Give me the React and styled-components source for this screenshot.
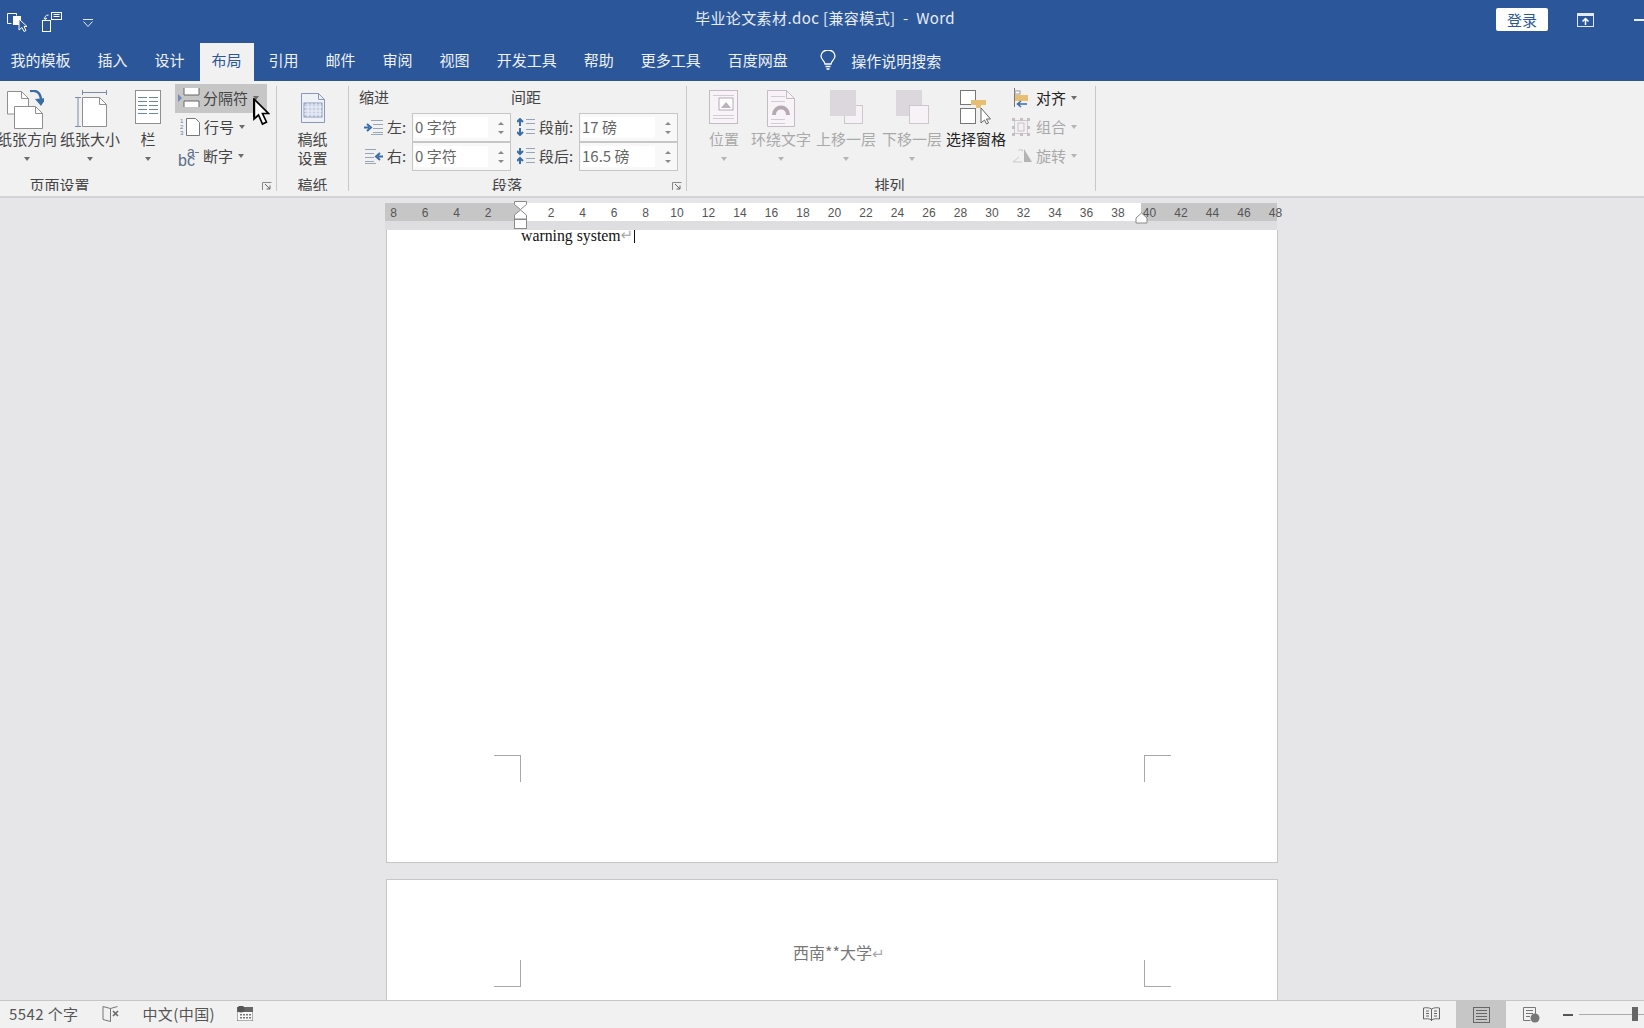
import React from 'react';
import styled, { createGlobalStyle } from 'styled-components';

const Global = createGlobalStyle`
  html, body { margin: 0; padding: 0; height: 100%; overflow: hidden; }
  #root { height: 100%; }
  * { box-sizing: border-box; }
`;

const App_ = styled.div`
  position: relative; height: 1028px; width: 1644px; overflow: hidden; display: flex; flex-direction: column;
  font-family: "Noto Sans CJK SC", "Liberation Sans", sans-serif; font-size: 15px; color: #444; background: #e6e6e8;
`;
const TitleBar = styled.div`
  position: relative; flex: 0 0 43px; background: #2b579a; display: flex; align-items: center; color: #f0f3f8;
`;
const Qat = styled.div`display: flex; align-items: center; padding-left: 6px; height: 100%;`;
const QatIcon = styled.svg`display: block; margin-right: ${p => p.$mr || 0}px; margin-top: ${p => p.$mt || 0}px;`;
const DocTitle = styled.div`
  position: absolute; left: 0; right: 0; top: 6px; text-align: center; padding-left: 6px; line-height: 24px; font-size: 15px; letter-spacing: .4px; white-space: pre; color: #e8edf5;
`;
const WinArea = styled.div`margin-left: auto; display: flex; align-items: center;`;
const SignIn = styled.div`
  width: 52px; height: 23px; background: #fff; border-radius: 2px; color: #2b579a; font-size: 15px; line-height: 23px; text-align: center; margin-right: 29px; margin-top: -4px;
`;
const RestoreIcon = styled.svg`display: block; margin-top: -4px;`;
const Minimize = styled.div`width: 10px; height: 2px; background: #e8edf5; margin-left: 40px; margin-top: -4px;`;

const TabBar = styled.div`
  flex: 0 0 38px; background: #2b579a; display: flex; align-items: stretch; margin-left: -3px;
`;
const Tab = styled.div`
  padding: 0 ${p => (p.$active ? '12.5px 0 12px' : '13.5px')}; margin-left: ${p => (p.$active ? '1.5px' : '0')}; margin-right: ${p => (p.$active ? '1px' : '0')}; line-height: 34px;
  color: ${p => (p.$active ? '#2b579a' : '#eef1f6')}; background: ${p => (p.$active ? '#f1f1f1' : 'transparent')};
  white-space: nowrap;
`;
const Search = styled.div`
  display: flex; align-items: center; color: #eef1f6; margin-left: 19px; gap: 15px; height: 34px;
`;
const LampIcon = styled.svg`display: block;`;

const Ribbon = styled.div`
  flex: 0 0 117px; background: #f1f1f1; border-bottom: 2px solid #d4d4d6; display: flex; padding-top: 5px;
`;
const Group = styled.div`
  position: relative; flex: 0 0 ${p => p.$w}px; height: 105px; border-right: 1px solid #c8c8c8; margin-left: ${p => p.$ml || 0}px; display: flex; flex-direction: column;
`;
const GroupBody = styled.div`flex: 0 0 89px; display: flex; align-items: flex-start; padding-left: ${p => p.$pl || 0}px;`;
const GroupLabel = styled.div`
  height: 16px; overflow: hidden; line-height: 20px; text-align: center; white-space: nowrap; color: #444; width: ${p => (p.$w ? `${p.$w}px` : 'auto')}; padding-left: ${p => p.$pl || 0}px;
`;
const Launcher = styled.svg`position: absolute; right: 4px; bottom: 0; display: block;`;
const BigBtn = styled.div`
  flex: 0 0 ${p => p.$w || 60}px; margin-left: ${p => p.$ml || 0}px; display: flex; flex-direction: column; align-items: center; color: ${p => (p.$off ? '#a9a9a9' : '#444')};
`;
const IconBox = styled.div`height: 43px; display: flex; align-items: flex-start; justify-content: center; padding-top: ${p => p.$top ?? 4}px; padding-right: ${p => p.$pr || 0}px;`;
const BigLabel = styled.div`line-height: 19px; white-space: nowrap; text-align: center; color: ${p => p.$c || 'inherit'};`;
const Caret = styled.span`
  display: inline-block; width: 0; height: 0; border-left: 3.5px solid transparent; border-right: 3.5px solid transparent; border-top: 4px solid ${p => (p.$off ? '#b5b5b5' : '#6d6d6d')};
`;
const CaretSlot = styled.div`height: 10px; margin-top: 6px; display: flex; align-items: center; justify-content: center;`;
const SmallCol = styled.div`flex: 0 0 ${p => p.$w}px; margin-left: ${p => p.$ml || 0}px; margin-top: -2px; display: flex; flex-direction: column;`;
const SmallBtn = styled.div`
  height: 29px; display: flex; align-items: center; padding-left: ${p => p.$pl || 0}px; padding-bottom: 2px; background: ${p => (p.$hot ? '#c6c6c6' : 'transparent')}; color: ${p => (p.$off ? '#a9a9a9' : '#444')}; white-space: nowrap;
`;
const SmallIcon = styled.div`flex: 0 0 ${p => p.$w || 28}px; display: flex; align-items: center;`;
const SmallText = styled.span`margin-right: 5px; color: ${p => p.$c || 'inherit'};`;

const ParaBody = styled.div`flex: 0 0 89px; display: grid; grid-template-columns: 152px 175px; padding-left: 10px; grid-template-rows: 27px 29px 29px;`;
const ParaHead = styled.div`line-height: 22px;`;
const SpinRow = styled.div`display: flex; align-items: center; padding-left: ${p => p.$pl || 5}px;`;
const SpinLabel = styled.div`flex: 0 0 ${p => p.$w}px; padding-left: ${p => p.$pl}px; white-space: nowrap; margin-top: -2px;`;
const SpinIcon = styled.svg`flex: 0 0 auto; display: block; margin-top: -1px;`;
const Spin = styled.div`
  flex: 0 0 99px; height: 29px; border: 1px solid #c6c6c6; background: #f8f8f8; display: flex; align-items: stretch;
`;
const SpinValue = styled.div`flex: 1; margin: 3px 0 3px 1px; background: #fff; color: #666; line-height: 19px; white-space: nowrap; padding-left: 1px;`;
const SpinArrows = styled.div`flex: 0 0 22px; display: flex; flex-direction: column; align-items: center; justify-content: center; gap: 6px; padding-left: 3px;`;
const MiniUp = styled.span`width: 0; height: 0; border-left: 3px solid transparent; border-right: 3px solid transparent; border-bottom: 3px solid #888;`;
const MiniDown = styled.span`width: 0; height: 0; border-left: 3px solid transparent; border-right: 3px solid transparent; border-top: 3px solid #888;`;

const Doc = styled.div`flex: 1; min-height: 0; overflow: hidden; padding: 5px 0 0 385px;`;
const RulerWrap = styled.div`position: relative; width: 892px;`;
const Ruler = styled.div`
  height: 18px; overflow: visible; display: flex; font-family: "Liberation Sans", sans-serif; font-size: 12px; color: #555;
  background: linear-gradient(to right, #c6c6c6 135px, #fff 135px, #fff 756px, #c6c6c6 756px);
`;
const TickTrack = styled.div`display: flex; margin-left: -7.25px;`;
const Tick = styled.div`flex: 0 0 31.5px; text-align: center; line-height: 20px;`;
const RulerBand = styled.div`height: 9px; background: #dedee0;`;
const RulerMarks = styled.svg`position: absolute; left: 0; top: -2px; display: block;`;
const Page = styled.div`
  position: relative; width: 892px; margin-left: 1px; height: ${p => p.$h}px; background: #fff; border: 1px solid #c6c6c6; border-top: ${p => (p.$first ? '0' : '1px solid #c6c6c6')};
  margin-bottom: 16px; padding-left: ${p => p.$pl}px; padding-top: ${p => p.$pt}px; overflow: hidden;
`;
const Line = styled.div`font-family: "Liberation Serif", serif; font-size: 15.8px; line-height: 17px; color: #111; display: flex; align-items: center; margin-top: -3px;`;
const Cursor = styled.span`display: inline-block; width: 1px; height: 15px; background: #111; margin-left: 1px;`;
const Mark = styled.span`color: #aaa; font-size: 15px; font-family: "DejaVu Sans", sans-serif;`;
const Campus = styled.div`font-size: 16px; line-height: 24px; color: #777; white-space: nowrap;`;
const Crop = styled.div`
  position: absolute; width: 27px; height: 27px; left: ${p => p.$x}px; top: ${p => p.$y}px;
  border-color: #a8a8a8; border-style: solid; border-width: 0;
  ${p => p.$dir === 'tr' ? 'border-top-width:1px;border-right-width:1px;' : ''}
  ${p => p.$dir === 'tl' ? 'border-top-width:1px;border-left-width:1px;' : ''}
  ${p => p.$dir === 'br' ? 'border-bottom-width:1px;border-right-width:1px;' : ''}
  ${p => p.$dir === 'bl' ? 'border-bottom-width:1px;border-left-width:1px;' : ''}
`;

const Status = styled.div`
  position: relative; flex: 0 0 28px; background: #f1f1f1; border-top: 1px solid #c6c6c6; display: flex; align-items: center; color: #555; font-size: 15px; line-height: 24px;
`;
const StatusLeft = styled.div`display: flex; align-items: center; padding: 0 0 2px 9px; height: 100%;`;
const StatusText = styled.span`margin-right: ${p => p.$mr}px; white-space: nowrap; letter-spacing: .4px;`;
const StatusIcon = styled.svg`display: block; margin-right: ${p => p.$mr || 0}px;`;
const StatusRight = styled.div`margin-left: auto; display: flex; align-items: stretch; height: 100%;`;
const ViewBtn = styled.div`
  flex: 0 0 50px; display: flex; align-items: center; justify-content: center; background: ${p => (p.$on ? '#c6c6c6' : 'transparent')};
`;
const Zoom = styled.div`position: relative; flex: 0 0 88px; display: flex; align-items: center; padding-left: 7px;`;
const ZoomMinus = styled.div`width: 10px; height: 2px; background: #555;`;
const ZoomLine = styled.div`flex: 1; height: 1px; background: #aaa; margin-left: 6px;`;
const ZoomThumb = styled.div`position: absolute; left: 76px; top: 6px; width: 6px; height: 14px; background: #666;`;
const Pointer = styled.svg`position: absolute; left: 253px; top: 98px; display: block;`;
const Svg = styled.svg`display: block;`;

const tabs = ['我的模板', '插入', '设计', '布局', '引用', '邮件', '审阅', '视图', '开发工具', '帮助', '更多工具', '百度网盘'];
const ticks = [8, 6, 4, 2, '', 2, 4, 6, 8, 10, 12, 14, 16, 18, 20, 22, 24, 26, 28, 30, 32, 34, 36, 38, 40, 42, 44, 46, 48];

const S = ({ w, h, children }) => <Svg width={w} height={h} viewBox={`0 0 ${w} ${h}`} fill="none">{children}</Svg>;

const Corner = () => (
  <Launcher width="10" height="9" viewBox="0 0 10 9" fill="none">
    <path d="M.5 8V.5H9.5" stroke="#8a8a8a" />
    <path d="M3 2l5 5M8 3.500V7H4.500" stroke="#666" />
  </Launcher>
);
const Orient = () => (
  <S w="38" h="39">
    <path d="M1.500 1.500h14l7 7V24h-21z" fill="#fff" stroke="#8f8f8f" />
    <path d="M15.500 1.500v7h7" stroke="#8f8f8f" />
    <path d="M8.500 16.500h21l7 7v15h-28z" fill="#fff" stroke="#8f8f8f" />
    <path d="M29.500 16.500v7h7" stroke="#8f8f8f" />
    <path d="M24 1c6-1 10 1 11 8" stroke="#3a6da8" strokeWidth="2.500" />
    <path d="M29 9l6 7 5-8z" fill="#3a6da8" />
  </S>
);
const SizeI = () => (
  <S w="33" h="37">
    <path d="M8.500 2.500h24M8.500 0v5M32.500 0v5" stroke="#7b8aa5" />
    <path d="M1 7.500h6M4 7.500v29M1 36.500h6" stroke="#7b8aa5" />
    <path d="M8.500 7.500h17l7 7v22h-24z" fill="#fff" stroke="#8f8f8f" />
    <path d="M25.500 7.500v7h7" stroke="#8f8f8f" />
  </S>
);
const Cols = () => (
  <S w="27" h="35">
    <rect x=".5" y=".5" width="25" height="33" fill="#fff" stroke="#8f8f8f" />
    {[7, 11, 15, 19, 23].map(y => <path key={y} d={`M3 ${y}.5h9M14 ${y}.5h9`} stroke="#6b86a8" />)}
  </S>
);
const Draft = () => (
  <S w="24" h="30">
    <path d="M.5.5h17l6 6v23H.5z" fill="#eef1f8" stroke="#8a97b5" />
    <path d="M17.500.5v6h6" stroke="#8a97b5" />
    <rect x="3" y="10" width="18" height="14" fill="#c9d1e6" stroke="#8a97b5" />
    {[14, 18, 21].map(y => <path key={y} d={`M3 ${y}h18`} stroke="#eef1f8" />)}
    {[7, 11, 15, 19].map(x => <path key={x} d={`M${x} 10v14`} stroke="#eef1f8" />)}
  </S>
);
const Position = () => (
  <S w="30" h="35">
    <rect x=".5" y=".5" width="28" height="33" fill="#f7f3f6" stroke="#c8bac4" />
    {[5, 25, 28].map(y => <path key={y} d={`M4 ${y}.5h21`} stroke="#d4cad2" />)}
    <rect x="10" y="8" width="14" height="12" fill="#fff" stroke="#b5aab3" />
    <path d="M12 18l5-6 5 6z" fill="#bcb2ba" />
  </S>
);
const Wrap = () => (
  <S w="28" h="37">
    <path d="M.5.5h19l8 8v28H.5z" fill="#f7f3f6" stroke="#c8bac4" />
    <path d="M19.500.5v8h8" stroke="#c8bac4" />
    {[6, 11, 29, 33].map(y => <path key={y} d={`M4 ${y}.5h14`} stroke="#d4cad2" />)}
    <path d="M7 25c0-10 14-10 14 0" stroke="#b5aab3" strokeWidth="4" />
  </S>
);
const LayerUp = () => (
  <S w="33" h="35">
    <rect x="14.500" y="15.500" width="18" height="18" fill="#f5f2f5" stroke="#cfc6cd" />
    <rect width="26" height="26" fill="#dcd7dc" />
  </S>
);
const LayerDown = () => (
  <S w="33" h="35">
    <rect width="26" height="26" fill="#dcd7dc" />
    <rect x="13.500" y="15.500" width="19" height="18" fill="#f6f2f6" stroke="#cfc6cd" />
  </S>
);
const SelectPane = () => (
  <S w="32" h="35">
    <rect x=".5" y=".5" width="15" height="14" fill="#fff" stroke="#777" />
    <rect x=".5" y="18.500" width="15" height="15" fill="#fff" stroke="#777" />
    <path d="M11 10h15v5h-5v3h-5v-3h-5z" fill="#e8bf72" />
    <path d="M21 18v15l3.500-3 2 4 2-1-2-4h4z" fill="#fff" stroke="#666" />
  </S>
);
const Breaks = () => (
  <S w="24" h="21">
    <path d="M0 7l4 4-4 4z" fill="#6f8db5" />
    <path d="M6 1v7h15V1M6 20v-6h15v6" fill="#fff" stroke="#666" />
  </S>
);
const LineNo = () => (
  <S w="24" h="18">
    <text x="0" y="5" fontSize="6" fill="#5a7da8" fontFamily="Liberation Sans">1</text>
    <text x="0" y="11" fontSize="6" fill="#5a7da8" fontFamily="Liberation Sans">2</text>
    <text x="0" y="17" fontSize="6" fill="#5a7da8" fontFamily="Liberation Sans">3</text>
    <path d="M6.500.5h9l4 4v13h-13z" fill="#fff" stroke="#777" />
  </S>
);
const Hyphen = () => (
  <S w="24" h="22">
    <text x="0" y="21" fontSize="16" fill="#5c6f88" fontFamily="Liberation Sans">b</text>
    <text x="9" y="21" fontSize="16" fill="#5c6f88" fontFamily="Liberation Sans">c</text>
    <text x="9" y="12" fontSize="14" fill="#5c6f88" fontFamily="Liberation Sans">a</text>
    <path d="M17 7.500h4" stroke="#777" />
  </S>
);
const Align = () => (
  <S w="17" h="20">
    <path d="M1.500 0v19" stroke="#777" />
    <rect x="2" y="3" width="5" height="3" fill="#fff" stroke="#999" />
    <rect x="2" y="7" width="13" height="6" fill="#e8bf72" />
    <path d="M14 16H5M8 13l-3.500 3 3.500 3" stroke="#3a6da8" strokeWidth="1.500" />
  </S>
);
const GroupI = () => (
  <S w="18" h="18">
    <rect x="2.500" y="2.500" width="13" height="13" stroke="#d0c8ce" />
    <rect x="6" y="5" width="6" height="8" stroke="#c9c1c7" />
    {[[0, 0], [8, 0], [15, 0], [0, 8], [15, 8], [0, 15], [8, 15], [15, 15]].map(([x, y]) => <rect key={`${x}-${y}`} x={x} y={y} width="3" height="3" fill="#c6bec4" />)}
  </S>
);
const Rotate = () => (
  <S w="20" h="15">
    <path d="M10 14H1l6-5" stroke="#c9c9c9" />
    <path d="M6 3c2-2 4-2 5 0M11 3l-2-1" stroke="#c9c9c9" />
    <path d="M12 1v13h8z" fill="#b4b4b4" />
  </S>
);
const IndentL = () => (
  <SpinIcon width="19" height="15" viewBox="0 0 19 15" fill="none">
    <path d="M7 .500h12M9 4.500h10M9 8.500h10M9 12.500h10M7 14.500h12" stroke="#98a5b8" />
    <path d="M0 7.500h5M3 4l4 3.500-4 3.500" stroke="#3a6da8" strokeWidth="2" />
  </SpinIcon>
);
const IndentR = () => (
  <SpinIcon width="19" height="15" viewBox="0 0 19 15" fill="none">
    <path d="M1 .500h11M1 4.500h9M1 8.500h9M1 12.500h9M1 14.500h11" stroke="#98a5b8" />
    <path d="M19 7.500h-5M16 4l-4 3.500 4 3.500" stroke="#3a6da8" strokeWidth="2" />
  </SpinIcon>
);
const SpaceB = () => (
  <SpinIcon width="19" height="18" viewBox="0 0 19 18" fill="none">
    <path d="M3 1v7M0 4l3-3 3 3M3 10v7M0 14l3 3 3-3" stroke="#3a6da8" strokeWidth="2" />
    <path d="M9 1.500h9M9 5.500h9M9 11.500h9M9 15.500h9" stroke="#98a5b8" />
  </SpinIcon>
);
const SpaceA = () => (
  <SpinIcon width="19" height="18" viewBox="0 0 19 18" fill="none">
    <path d="M3 1v6M0 4l3 3 3-3M3 11v6M0 14l3-3 3 3" stroke="#3a6da8" strokeWidth="2" />
    <path d="M9 1.500h9M9 5.500h9M9 11.500h9M9 15.500h9" stroke="#98a5b8" />
  </SpinIcon>
);

const SpinBox = ({ value }) => (
  <Spin><SpinValue>{value}</SpinValue><SpinArrows><MiniUp /><MiniDown /></SpinArrows></Spin>
);

export default function App() {
  return (
    <App_>
      <Global />
      <TitleBar>
        <Qat>
          <QatIcon $mr={15} width="21" height="22" viewBox="0 0 21 22" fill="none">
            <path d="M1.500 2.500h9v2M1.500 2.500v10h4" stroke="#fff" />
            <rect x="7" y="5" width="8" height="9" fill="#fff" />
            <path d="M13 8v11l3-2.500 2 4 2-1-2-4h3z" fill="#2b579a" stroke="#fff" />
          </QatIcon>
          <QatIcon $mr={21} width="20" height="21" viewBox="0 0 20 21" fill="none">
            <rect x=".5" y="9.500" width="8" height="11" stroke="#fff" />
            <path d="M6.500 4c-3 0-4 2-3.500 4M2 7l1 1.500L5 7" stroke="#fff" />
            <rect x="9.500" y="1.500" width="10" height="7" stroke="#fff" />
            <path d="M11.500 3.500h6M11.500 5.500h6" stroke="#fff" />
          </QatIcon>
          <QatIcon $mt={3} width="10" height="8" viewBox="0 0 10 8" fill="none">
            <path d="M0 .500h10M.5 2.500l4.500 5 4.500-5" stroke="#e3e9f2" />
          </QatIcon>
        </Qat>
        <DocTitle>{'毕业论文素材.doc [兼容模式]  -  Word'}</DocTitle>
        <WinArea>
          <SignIn>登录</SignIn>
          <RestoreIcon width="17" height="14" viewBox="0 0 17 14" fill="none">
            <rect x=".5" y=".5" width="16" height="13" stroke="#e3e9f2" />
            <rect x="1" y="1" width="15" height="2" fill="#e3e9f2" />
            <path d="M8.500 12V6M5.500 8.500l3-3 3 3" stroke="#fff" strokeWidth="1.500" />
          </RestoreIcon>
          <Minimize />
        </WinArea>
      </TitleBar>
      <TabBar>
        {tabs.map(t => <Tab key={t} $active={t === '布局'}>{t}</Tab>)}
        <Search>
          <LampIcon width="16" height="20" viewBox="0 0 16 20" fill="none">
            <path d="M5 14c0-3-4-4-4-8a7 6 0 0 1 14 0c0 4-4 5-4 8z" stroke="#fff" strokeWidth="1.300" />
            <path d="M5.500 16.500h5M6.500 19h3" stroke="#fff" strokeWidth="1.300" />
          </LampIcon>
          操作说明搜索
        </Search>
      </TabBar>
      <Ribbon>
        <Group $w={280} $ml={-3}>
          <GroupBody>
            <BigBtn><IconBox $pr={4}><Orient /></IconBox><BigLabel>纸张方向</BigLabel><CaretSlot><Caret /></CaretSlot></BigBtn>
            <BigBtn $ml={3}><IconBox><SizeI /></IconBox><BigLabel>纸张大小</BigLabel><CaretSlot><Caret /></CaretSlot></BigBtn>
            <BigBtn $w={40} $ml={8}><IconBox><Cols /></IconBox><BigLabel>栏</BigLabel><CaretSlot><Caret /></CaretSlot></BigBtn>
            <SmallCol $w={92} $ml={7}>
              <SmallBtn $hot $pl={3}><SmallIcon $w={25}><Breaks /></SmallIcon><SmallText>分隔符</SmallText><Caret /></SmallBtn>
              <SmallBtn $pl={5}><SmallIcon $w={23}><LineNo /></SmallIcon><SmallText>行号</SmallText><Caret /></SmallBtn>
              <SmallBtn $pl={3}><SmallIcon $w={25}><Hyphen /></SmallIcon><SmallText>断字</SmallText><Caret /></SmallBtn>
            </SmallCol>
          </GroupBody>
          <GroupLabel $pl={3} $w={122}>页面设置</GroupLabel>
          <Corner />
        </Group>
        <Group $w={72}>
          <GroupBody>
            <BigBtn $w={71}><IconBox $top={7}><Draft /></IconBox><BigLabel>稿纸<br />设置</BigLabel></BigBtn>
          </GroupBody>
          <GroupLabel>稿纸</GroupLabel>
        </Group>
        <Group $w={337}>
          <ParaBody>
            <ParaHead>缩进</ParaHead>
            <ParaHead>间距</ParaHead>
            <SpinRow><IndentL /><SpinLabel $w={29} $pl={4}>左:</SpinLabel><SpinBox value="0 字符" /></SpinRow>
            <SpinRow $pl={6}><SpaceB /><SpinLabel $w={43} $pl={3}>段前:</SpinLabel><SpinBox value="17 磅" /></SpinRow>
            <SpinRow><IndentR /><SpinLabel $w={29} $pl={4}>右:</SpinLabel><SpinBox value="0 字符" /></SpinRow>
            <SpinRow $pl={6}><SpaceA /><SpinLabel $w={43} $pl={3}>段后:</SpinLabel><SpinBox value="16.5 磅" /></SpinRow>
          </ParaBody>
          <GroupLabel $w={316}>段落</GroupLabel>
          <Corner />
        </Group>
        <Group $w={409}>
          <GroupBody $pl={7}>
            <BigBtn $off><IconBox><Position /></IconBox><BigLabel>位置</BigLabel><CaretSlot><Caret $off /></CaretSlot></BigBtn>
            <BigBtn $off $ml={-3}><IconBox><Wrap /></IconBox><BigLabel>环绕文字</BigLabel><CaretSlot><Caret $off /></CaretSlot></BigBtn>
            <BigBtn $off $ml={5}><IconBox><LayerUp /></IconBox><BigLabel>上移一层</BigLabel><CaretSlot><Caret $off /></CaretSlot></BigBtn>
            <BigBtn $off $ml={6}><IconBox><LayerDown /></IconBox><BigLabel>下移一层</BigLabel><CaretSlot><Caret $off /></CaretSlot></BigBtn>
            <BigBtn $ml={4}><IconBox><SelectPane /></IconBox><BigLabel $c="#222">选择窗格</BigLabel></BigBtn>
            <SmallCol $w={75} $ml={6}>
              <SmallBtn $pl={1}><SmallIcon $w={23}><Align /></SmallIcon><SmallText $c="#222">对齐</SmallText><Caret /></SmallBtn>
              <SmallBtn $off $pl={0}><SmallIcon $w={24}><GroupI /></SmallIcon><SmallText>组合</SmallText><Caret $off /></SmallBtn>
              <SmallBtn $off $pl={0}><SmallIcon $w={24}><Rotate /></SmallIcon><SmallText>旋转</SmallText><Caret $off /></SmallBtn>
            </SmallCol>
          </GroupBody>
          <GroupLabel $w={405}>排列</GroupLabel>
        </Group>
      </Ribbon>
      <Doc>
        <RulerWrap>
          <Ruler>
            <TickTrack>{ticks.map((t, i) => <Tick key={i}>{t}</Tick>)}</TickTrack>
          </Ruler>
          <RulerBand />
          <RulerMarks width="892" height="32" viewBox="0 0 892 32" fill="none">
            <path d="M129.500.5h12v3l-6 5-6-5z" fill="#fff" stroke="#8a8a8a" />
            <path d="M135.500 9l6 5v4h-12v-4z" fill="#fff" stroke="#8a8a8a" />
            <rect x="129.500" y="18.500" width="12" height="9" fill="#fff" stroke="#8a8a8a" />
            <path d="M756.500 12l5.500 5v5h-11v-5z" fill="#fff" stroke="#8a8a8a" />
          </RulerMarks>
        </RulerWrap>
        <Page $first $h={633} $pl={134} $pt={0}>
          <Line>warning system<Mark>↵</Mark><Cursor /></Line>
          <Crop $dir="tr" $x={107} $y={525} />
          <Crop $dir="tl" $x={757} $y={525} />
        </Page>
        <Page $h={200} $pl={406} $pt={60}>
          <Campus>西南**大学<Mark>↵</Mark></Campus>
          <Crop $dir="br" $x={107} $y={80} />
          <Crop $dir="bl" $x={757} $y={80} />
        </Page>
      </Doc>
      <Status>
        <StatusLeft>
          <StatusText $mr={24}>5542 个字</StatusText>
          <StatusIcon $mr={22} width="18" height="16" viewBox="0 0 18 16" fill="none">
            <path d="M8.500 2.500L1 .5v13l7.500 2zM8.500 2.500l7-2" stroke="#777" />
            <path d="M11 5l5 5M16 5l-5 5" stroke="#666" strokeWidth="1.600" />
          </StatusIcon>
          <StatusText $mr={22}>中文(中国)</StatusText>
          <StatusIcon width="16" height="15" viewBox="0 0 16 15">
            <rect y="3" width="16" height="12" fill="#f8f8f8" stroke="#666" />
            <rect width="16" height="5" y="1" fill="#666" />
            <circle cx="4" cy="3" r="3.500" fill="#555" />
            {[8, 11].map(y => [3, 6, 9, 12].map(x => <rect key={`${x}${y}`} x={x} y={y} width="2" height="1.500" fill="#777" />))}
          </StatusIcon>
        </StatusLeft>
        <StatusRight>
          <ViewBtn>
            <Svg width="17" height="15" viewBox="0 0 17 15" fill="none">
              <path d="M8.500 2C6 .5 3 .5.500 1v11c2.500-.5 5.500-.5 8 1 2.500-1.500 5.500-1.500 8-1V1c-2.500-.5-5.500-.5-8 1zM8.500 2v12M3 4h3M3 6.500h3M3 9h3M11 4h3M11 6.500h3M11 9h3" stroke="#666" />
            </Svg>
          </ViewBtn>
          <ViewBtn $on>
            <Svg width="17" height="16" viewBox="0 0 17 16" fill="none">
              <rect x=".5" y=".5" width="16" height="15" stroke="#666" />
              <path d="M3 3.500h11M3 6.500h11M3 9.500h11M3 12.500h11" stroke="#666" />
            </Svg>
          </ViewBtn>
          <ViewBtn>
            <Svg width="17" height="16" viewBox="0 0 17 16" fill="none">
              <path d="M.5.500h12v8M.5.500v13h7" stroke="#777" />
              <path d="M3 3.500h7M3 6.500h7M3 9.500h4" stroke="#777" />
              <circle cx="12" cy="11" r="4.500" fill="#777" />
            </Svg>
          </ViewBtn>
          <Zoom>
            <ZoomMinus />
            <ZoomLine />
            <ZoomThumb />
          </Zoom>
        </StatusRight>
      </Status>
      <Pointer width="17" height="28" viewBox="0 0 17 28" fill="none">
        <path d="M1 1v20l4.500-4 4 9 4-2-4-8.500h6z" fill="#fff" stroke="#000" strokeWidth="1.700" />
        <path d="M1 1v18" stroke="#000" strokeWidth="2.400" />
      </Pointer>
    </App_>
  );
}
